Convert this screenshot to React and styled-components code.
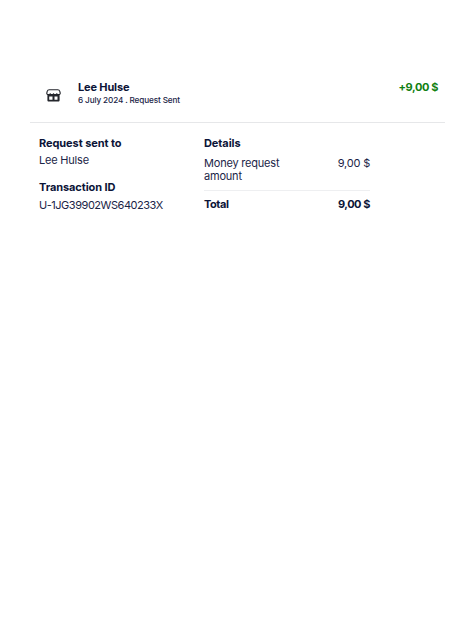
import React from "react";
import styled, { createGlobalStyle } from "styled-components";

const transaction = {
  name: "Lee Hulse",
  info: "6 July 2024 . Request Sent",
  amount: "9,00 $",
  id: "U-1JG39902WS640233X",
};

const StoreIcon = () => (
  <svg width="15" height="13" viewBox="0 0 15 13" fill="none">
    <path
      d="M1.400 5h12.200v6.200c0 .8-.5 1.300-1.300 1.300H2.700c-.8 0-1.300-.5-1.300-1.300z"
      fill="#24262c"
    />
    <path
      d="M3.200.8h8.600c1.300 0 1.700.6 2 1.600l.4 1.600c.2.900-.5 1.500-1.500 1.500s-1.500-.3-1.900-.7c-.4.400-1 .7-1.700.7s-1.200-.3-1.600-.7c-.4.400-.9.700-1.600.7s-1.300-.3-1.700-.7c-.4.400-.9.700-1.900.7S.600 4.900.8 4l.4-1.600C1.500 1.400 1.900.8 3.200.8z"
      fill="#fff"
      stroke="#24262c"
      strokeWidth="1.100"
    />
    <path d="M3.200 7.500h3.300v3.200H3.200zM8.500 7.500h3v3.200h-3z" fill="#fff" />
  </svg>
);

const App = () => {
  return (
    <Page>
      <GlobalStyle />
      <Header>
        <IconBox>
          <StoreIcon />
        </IconBox>
        <Person>
          <Name>{transaction.name}</Name>
          <Info>{transaction.info}</Info>
        </Person>
        <Amount>+{transaction.amount}</Amount>
      </Header>
      <Content>
        <Column>
          <Title>Request sent to</Title>
          <Value>{transaction.name}</Value>
          <Title $top="12px">Transaction ID</Title>
          <Value $top="3px" $spacing="-0.47px">
            {transaction.id}
          </Value>
        </Column>
        <Column>
          <Title>Details</Title>
          <Row>
            <Label>Money request amount</Label>
            <span>{transaction.amount}</span>
          </Row>
          <TotalRow>
            <span>Total</span>
            <span>{transaction.amount}</span>
          </TotalRow>
        </Column>
      </Content>
    </Page>
  );
};

const GlobalStyle = createGlobalStyle`
  body {
    margin: 0;
    background: #fff;
  }
`;

const Page = styled.div`
  box-sizing: border-box;
  min-height: 632px;
  padding: 80px 29px 0 30px;
  font-family: Inter, "Liberation Sans", sans-serif;
  font-size: 11px;
  letter-spacing: -0.08px;
  color: #1b2547;
`;

const Header = styled.div`
  display: flex;
  box-sizing: border-box;
  height: 43px;
  padding: 0 7px 0 16px;
  border-bottom: 1px solid #e6e7e9;
`;

const IconBox = styled.div`
  width: 32px;
  padding-top: 9px;
  line-height: 0;
`;

const Person = styled.div`
  flex: 1;
`;

const Name = styled.div`
  line-height: 15px;
  font-weight: 700;
  letter-spacing: -0.15px;
  color: #0b1437;
`;

const Info = styled.div`
  font-size: 8.2px;
  line-height: 11px;
  font-weight: 500;
  letter-spacing: -0.13px;
`;

const Amount = styled.div`
  line-height: 15px;
  font-weight: 700;
  letter-spacing: -0.4px;
  color: #118011;
`;

const Content = styled.div`
  display: grid;
  grid-template-columns: 165px 166px;
  padding: 13px 9px 0;
`;

const Column = styled.div`
  display: flex;
  flex-direction: column;
`;

const Title = styled.div`
  margin-top: ${(props) => props.$top || 0};
  line-height: 15px;
  font-weight: 700;
  color: #0b1437;
`;

const Value = styled.div`
  margin-top: ${(props) => props.$top || "2px"};
  line-height: 15px;
  letter-spacing: ${(props) => props.$spacing || "-0.2px"};
`;

const Row = styled.div`
  display: flex;
  justify-content: space-between;
  padding: 6px 0 7px;
  line-height: 13px;
  letter-spacing: -0.2px;
  border-bottom: 1px solid #eeeff1;
`;

const Label = styled.span`
  width: 90px;
`;

const TotalRow = styled.div`
  display: flex;
  justify-content: space-between;
  padding-top: 5px;
  line-height: 16px;
  font-weight: 700;
  letter-spacing: -0.45px;
  color: #0b1437;
`;

export default App;
